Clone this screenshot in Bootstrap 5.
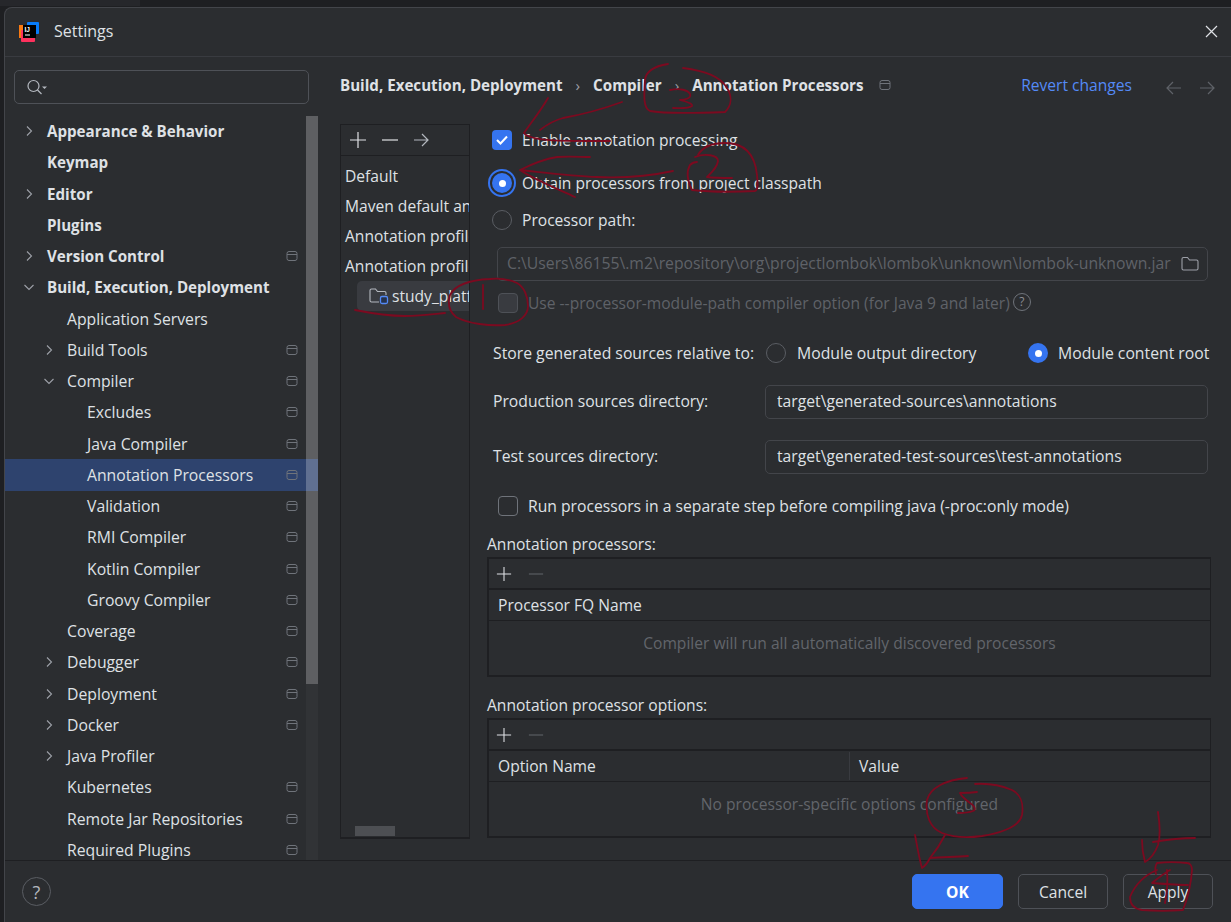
<!DOCTYPE html>
<html lang="en">
<head>
  <meta charset="UTF-8" />
  <meta name="viewport" content="width=device-width, initial-scale=1.0"/>
  <title>Settings</title>
  <link href="https://cdn.jsdelivr.net/npm/bootstrap@5.3.3/dist/css/bootstrap.min.css" rel="stylesheet" />
  <style>
    body { background-color: #1e1f22; color: #dfe1e5; font-family: "Open Sans", "Liberation Sans", sans-serif; font-size: 15.6px; line-height: 20px; }
    .page { width: 1231px; height: 922px; padding-left: 4px; position: relative; overflow: hidden; }
    .strip { width: 140px; height: 6px; margin: 0 0 1px -4px; background: #26272b; }
    .dlg { height: 915px; background: #2b2d30; border: 1px solid #43454a; border-width: 1px 0 0 1px; border-top-left-radius: 8px; }
    .title-bar { height: 49px; padding-left: 14px; border-bottom: 1px solid #393b40; font-size: 16px; }
    .title-bar .caption { margin-left: 15px; margin-bottom: 2px; }
    .close-x { margin-right: 13px; margin-left: auto; margin-bottom: 2px; }
    .middle { height: 803px; }
    .side { width: 313px; flex: none; }
    .search { margin: 13px 0 11.6px 9px; width: 295px; height: 34px; border: 1px solid #4e5157; border-radius: 5px; padding-left: 12px; }
    .tree-wrap { height: 744.4px; overflow: hidden; position: relative; font-size: 15.75px; }
    .row-t { height: 31.26px; padding-right: 20px; white-space: nowrap; }
    .row-t .arrow { width: 18px; flex: none; margin-left: 15px; }
    .lv0 .name { margin-left: 9px; font-weight: 700; font-size: 15.15px; }
    .lv1 .name { margin-left: 29px; }
    .lv2 .name { margin-left: 49px; }
    .lv1 .arrow, .lv2 .arrow { margin-left: 35px; margin-right: -20px; }
    .row-t.sel { background: #2e436e; }
    .row-t .pin { margin-left: auto; }
    /* scrollbar lies over the tree rows */
    .vbar { position: absolute; right: 0; top: 0; bottom: 0; width: 12px; background: rgba(255, 255, 255, .03); }
    .vbar div { height: 568px; background: rgba(255, 255, 255, .22); }
    .main { flex: 1; padding: 0 20px 0 22px; min-width: 0; }
    .crumbs { height: 56px; font-weight: 700; font-size: 15.15px; margin-bottom: 11px; }
    .crumbs .sep { color: #9da0a8; margin: 0 13px; font-weight: 400; }
    .crumbs .end-arrows { margin-right: -4px; }
    .link-blue { color: #548af7; text-decoration: none; font-size: 15.6px; }
    .nav-arrow { margin-top: 6px; margin-left: 17px; }
    .nav-arrow.first { margin-left: 34px; transform: scaleX(-1); }
    .profiles { width: 130px; height: 715px; flex: none; border: 1px solid #1e1f22; border-bottom-width: 2px; position: relative; overflow: hidden; }
    .prof-bar { height: 31px; border-bottom: 1px solid #1e1f22; padding-left: 8px; gap: 14px; }
    .c-soft { color: #b4b8bf; }
    .c-main { color: #dfe1e5; }
    .prof-list { padding-top: 5px; }
    .prof-list div { height: 30.1px; padding-left: 4px; white-space: nowrap; display: flex; align-items: center; }
    .prof-list .mod { background: #393b40; margin-left: 16px; padding-left: 12px; border-radius: 5px 0 0 5px; gap: 3px; }
    .hbar { position: absolute; left: 14px; bottom: 1px; width: 40px; height: 10px; background: #4d4f53; }
    .opts { flex: 1; margin-left: 17px; min-width: 0; }
    .line { height: 32px; white-space: nowrap; }
    .top-row { padding-left: 5px; }
    .mt-obtain { margin-top: 11px; }
    .mt-path { margin-top: 5px; }
    .lbl { margin-left: 10px; }
    .ij-check { width: 20px; height: 20px; border-radius: 4px; flex: none; background: #3574f0; }
    .ij-check.off { background: #393b40; border: 1px solid #4e5157; }
    .ij-check.plain { background: transparent; border: 1px solid #6f737a; }
    .ij-radio { width: 20px; height: 20px; border-radius: 50%; flex: none; border: 1px solid #5a5d63; }
    .ij-radio.on { background: #3574f0; border: 0; display: flex; align-items: center; justify-content: center; }
    .ij-radio.on::after { content: ""; width: 7px; height: 7px; background: #fff; border-radius: 50%; }
    .ij-radio.focus { box-shadow: 0 0 0 2px #2b2d30, 0 0 0 4px #3574f0; }
    .dim { color: #5f6268; }
    .dim2 { color: #62656b; }
    .form-control.ij { height: 34px; background: #2b2d30; border: 1px solid #43454a; border-radius: 5px; color: #dfe1e5; font-size: 15.7px; padding: 0 10px 2px 11px; line-height: 30px; box-shadow: none; }
    .form-control.ij.off { color: #5f6268; padding-left: 9px; font-size: 15.75px; }
    .path-box { margin: 11px 3px 0 10px; }
    .folder { position: absolute; right: 9px; top: 9px; }
    .chk-row { padding-left: 11px; }
    .mt-chk { margin-top: 6px; }
    .q-mark { width: 18px; height: 18px; border: 1px solid #6f737a; border-radius: 50%; color: #8b8e95; font-size: 12px; display: flex; align-items: center; justify-content: center; margin-left: 3px; margin-bottom: 2px; }
    .store-row { margin-top: 18px; padding-left: 6px; font-size: 15.75px; }
    .store-row .cap { width: 273px; flex: none; }
    .store-row .opt1 { width: 231px; margin-left: 11px; flex: none; }
    .store-row .opt2 { margin-left: 10px; }
    .dir-row { padding: 0 3px 0 6px; font-size: 15.7px; }
    .dir-row span { width: 272px; flex: none; margin-bottom: 2px; }
    .dir-a { margin-top: 16px; }
    .dir-b { margin-top: 21px; }
    .run-row { margin-top: 16px; font-size: 15.7px; }
    .group-label { height: 20px; margin-bottom: 3px; }
    .group-label.first { margin-top: 12px; }
    .group-label.second { margin-top: 18px; }
    .group { height: 120px; border: 1px solid #1e1f22; border-width: 2px 1px 2px 2px; overflow: hidden; }
    .group-bar { height: 31px; border-bottom: 2px solid #1e1f22; padding-left: 7px; gap: 16px; }
    .group-head { height: 31px; border-bottom: 1px solid #1e1f22; padding-left: 9px; }
    .group-head .col2 { border-left: 1px solid #393b40; padding-left: 9px; height: 28px; margin-left: auto; width: 361px; display: flex; align-items: center; }
    .group-empty { height: 54px; padding-bottom: 10px; }
    .footer { height: 62px; border-top: 1px solid #1e1f22; padding: 0 18px 0 17px; }
    .btn.ij { width: 90px; height: 35px; padding: 2px 0 0; font-size: 15.6px; color: #dfe1e5; border: 1px solid #4e5157; border-radius: 5px; background: transparent; margin-left: 15px; }
    .btn.ij.primary { width: 91px; background: #3574f0; border-color: #3574f0; color: #fff; font-weight: 700; margin-left: auto; }
    .help { width: 29px; height: 29px; border: 1px solid #5a5d63; border-radius: 50%; color: #b4b8bf; font-size: 18px; }
    .ink { position: absolute; left: 0; top: 0; pointer-events: none; }
    .ink path { fill: none; stroke: #7c0a20; stroke-width: 1.8; stroke-linecap: round; stroke-linejoin: round; }
    .logo-text { font: 700 6.5px "Liberation Sans", sans-serif; fill: #fff; }
  </style>
</head>
<body>
  <svg width="0" height="0" class="position-absolute">
    <symbol id="pin" viewBox="0 0 12 12"><rect x="1" y="1.5" width="10" height="9" rx="2" fill="none" stroke="#6f737a"/><path d="M1 4.5h10" stroke="#6f737a"/></symbol>
    <symbol id="right" viewBox="0 0 12 12"><path d="M4 1.5 8.5 6 4 10.5" fill="none" stroke="#9da0a8" stroke-width="1.1"/></symbol>
    <symbol id="down" viewBox="0 0 12 12"><path d="M1.5 4 6 8.5 10.5 4" fill="none" stroke="#9da0a8" stroke-width="1.1"/></symbol>
    <symbol id="plus" viewBox="0 0 18 18"><path d="M9 1v16M1 9h16" stroke="#dfe1e5" stroke-width="1.2"/></symbol>
    <symbol id="minus" viewBox="0 0 18 18"><path d="M1 9h16" stroke="currentColor" stroke-width="1.2"/></symbol>
    <symbol id="arrow" viewBox="0 0 16 14"><path d="M1 7h14M9 1l6 6-6 6" fill="none" stroke="currentColor" stroke-width="1.2"/></symbol>
  </svg>

  <div class="page">
    <div class="strip"></div>
    <div class="dlg d-flex flex-column">
      <div class="title-bar d-flex align-items-center">
        <svg width="20" height="20" viewBox="0 0 20 20">
          <rect x="0" y="3" width="13" height="13" fill="#f97a12"/>
          <rect x="8" y="0" width="12" height="12" rx="1" fill="#087cfa"/>
          <rect x="2" y="8" width="14" height="12" rx="1" fill="#fe315d"/>
          <rect x="4" y="3" width="13" height="13" fill="#000"/>
          <rect x="6" y="12.5" width="5" height="1" fill="#fff"/>
          <text class="logo-text" x="5.500" y="10">IJ</text>
        </svg>
        <span class="caption">Settings</span>
        <svg class="close-x" width="13" height="13" viewBox="0 0 13 13"><path d="M1 1l11 11M12 1 1 12" stroke="#dfe1e5" stroke-width="1.2"/></svg>
      </div>

      <div class="middle d-flex">
        <div class="side">
          <div class="search d-flex align-items-center">
            <svg width="20" height="17" viewBox="0 0 20 17"><circle cx="6.500" cy="7" r="5.500" fill="none" stroke="#b4b8bf" stroke-width="1.2"/><path d="M10.500 11l4 4" stroke="#b4b8bf" stroke-width="1.2"/><path d="M15 7.500h5l-2.500 2.500z" fill="#b4b8bf"/></svg>
          </div>
          <div class="tree-wrap">
            <div class="row-t lv0 d-flex align-items-center"><svg class="arrow" height="12"><use href="#right"/></svg><span class="name">Appearance &amp; Behavior</span></div>
            <div class="row-t lv0 d-flex align-items-center"><span class="arrow"></span><span class="name">Keymap</span></div>
            <div class="row-t lv0 d-flex align-items-center"><svg class="arrow" height="12"><use href="#right"/></svg><span class="name">Editor</span></div>
            <div class="row-t lv0 d-flex align-items-center"><span class="arrow"></span><span class="name">Plugins</span></div>
            <div class="row-t lv0 d-flex align-items-center"><svg class="arrow" height="12"><use href="#right"/></svg><span class="name">Version Control</span><svg class="pin" width="12" height="12"><use href="#pin"/></svg></div>
            <div class="row-t lv0 d-flex align-items-center"><svg class="arrow" height="12"><use href="#down"/></svg><span class="name">Build, Execution, Deployment</span></div>
            <div class="row-t lv1 d-flex align-items-center"><span class="arrow"></span><span class="name">Application Servers</span></div>
            <div class="row-t lv1 d-flex align-items-center"><svg class="arrow" height="12"><use href="#right"/></svg><span class="name">Build Tools</span><svg class="pin" width="12" height="12"><use href="#pin"/></svg></div>
            <div class="row-t lv1 d-flex align-items-center"><svg class="arrow" height="12"><use href="#down"/></svg><span class="name">Compiler</span><svg class="pin" width="12" height="12"><use href="#pin"/></svg></div>
            <div class="row-t lv2 d-flex align-items-center"><span class="arrow"></span><span class="name">Excludes</span><svg class="pin" width="12" height="12"><use href="#pin"/></svg></div>
            <div class="row-t lv2 d-flex align-items-center"><span class="arrow"></span><span class="name">Java Compiler</span><svg class="pin" width="12" height="12"><use href="#pin"/></svg></div>
            <div class="row-t lv2 sel d-flex align-items-center"><span class="arrow"></span><span class="name">Annotation Processors</span><svg class="pin" width="12" height="12"><use href="#pin"/></svg></div>
            <div class="row-t lv2 d-flex align-items-center"><span class="arrow"></span><span class="name">Validation</span><svg class="pin" width="12" height="12"><use href="#pin"/></svg></div>
            <div class="row-t lv2 d-flex align-items-center"><span class="arrow"></span><span class="name">RMI Compiler</span><svg class="pin" width="12" height="12"><use href="#pin"/></svg></div>
            <div class="row-t lv2 d-flex align-items-center"><span class="arrow"></span><span class="name">Kotlin Compiler</span><svg class="pin" width="12" height="12"><use href="#pin"/></svg></div>
            <div class="row-t lv2 d-flex align-items-center"><span class="arrow"></span><span class="name">Groovy Compiler</span><svg class="pin" width="12" height="12"><use href="#pin"/></svg></div>
            <div class="row-t lv1 d-flex align-items-center"><span class="arrow"></span><span class="name">Coverage</span><svg class="pin" width="12" height="12"><use href="#pin"/></svg></div>
            <div class="row-t lv1 d-flex align-items-center"><svg class="arrow" height="12"><use href="#right"/></svg><span class="name">Debugger</span><svg class="pin" width="12" height="12"><use href="#pin"/></svg></div>
            <div class="row-t lv1 d-flex align-items-center"><svg class="arrow" height="12"><use href="#right"/></svg><span class="name">Deployment</span><svg class="pin" width="12" height="12"><use href="#pin"/></svg></div>
            <div class="row-t lv1 d-flex align-items-center"><svg class="arrow" height="12"><use href="#right"/></svg><span class="name">Docker</span><svg class="pin" width="12" height="12"><use href="#pin"/></svg></div>
            <div class="row-t lv1 d-flex align-items-center"><svg class="arrow" height="12"><use href="#right"/></svg><span class="name">Java Profiler</span></div>
            <div class="row-t lv1 d-flex align-items-center"><span class="arrow"></span><span class="name">Kubernetes</span><svg class="pin" width="12" height="12"><use href="#pin"/></svg></div>
            <div class="row-t lv1 d-flex align-items-center"><span class="arrow"></span><span class="name">Remote Jar Repositories</span><svg class="pin" width="12" height="12"><use href="#pin"/></svg></div>
            <div class="row-t lv1 d-flex align-items-center"><span class="arrow"></span><span class="name">Required Plugins</span><svg class="pin" width="12" height="12"><use href="#pin"/></svg></div>
            <div class="vbar"><div></div></div>
          </div>
        </div>

        <div class="main">
          <div class="crumbs d-flex align-items-center">
            <span>Build, Execution, Deployment</span><span class="sep">›</span><span>Compiler</span><span class="sep">›</span><span>Annotation Processors</span>
            <svg class="ms-3" width="12" height="12"><use href="#pin"/></svg>
            <a class="link-blue fw-normal ms-auto" href="#">Revert changes</a>
            <svg class="dim nav-arrow first" width="16" height="14"><use href="#arrow"/></svg>
            <svg class="dim nav-arrow end-arrows" width="16" height="14"><use href="#arrow"/></svg>
          </div>

          <div class="d-flex">
            <div class="profiles">
              <div class="prof-bar d-flex align-items-center">
                <svg width="18" height="18"><use href="#plus"/></svg>
                <svg width="18" height="18" class="c-main"><use href="#minus"/></svg>
                <svg width="16" height="14" class="c-soft"><use href="#arrow"/></svg>
              </div>
              <div class="prof-list">
                <div>Default</div>
                <div>Maven default annotation processors profile</div>
                <div>Annotation profile for platform</div>
                <div>Annotation profile for study</div>
                <div class="mod">
                  <svg width="20" height="18" viewBox="0 0 20 18" class="flex-shrink-0"><path d="M1 3.500q0-1.500 1.500-1.500h4l2 2.500h7q1.500 0 1.500 1.500v2M10 15H2.500Q1 15 1 13.500V3.500" fill="none" stroke="#b4b8bf" stroke-width="1.100"/><rect x="11.500" y="9.500" width="7" height="7" rx="1.500" fill="#25324d" stroke="#548af7" stroke-width="1.300"/></svg>
                  <span>study_platform</span>
                </div>
              </div>
              <div class="hbar"></div>
            </div>

            <div class="opts">
              <div class="line top-row d-flex align-items-center">
                <span class="ij-check d-flex align-items-center justify-content-center"><svg width="14" height="12" viewBox="0 0 14 12"><path d="M2 6l3.500 3.500L12 2.500" fill="none" stroke="#fff" stroke-width="2"/></svg></span>
                <span class="lbl">Enable annotation processing</span>
              </div>
              <div class="line top-row mt-obtain d-flex align-items-center">
                <span class="ij-radio on focus"></span>
                <span class="lbl">Obtain processors from project classpath</span>
              </div>
              <div class="line top-row mt-path d-flex align-items-center">
                <span class="ij-radio"></span>
                <span class="lbl">Processor path:</span>
              </div>
              <div class="position-relative path-box">
                <input class="form-control ij off" value="C:\Users\86155\.m2\repository\org\projectlombok\lombok\unknown\lombok-unknown.jar" readonly>
                <svg class="folder" width="18" height="16" viewBox="0 0 18 16"><path d="M1 3q0-1.500 1.500-1.500h4l2 2.500h7q1.500 0 1.500 1.500v7q0 1.500-1.500 1.500h-13Q1 14 1 12.500z" fill="none" stroke="#9da0a8" stroke-width="1.100"/></svg>
              </div>
              <div class="line chk-row mt-chk d-flex align-items-center">
                <span class="ij-check off"></span>
                <span class="dim lbl">Use --processor-module-path compiler option (for Java 9 and later)</span>
                <span class="q-mark">?</span>
              </div>
              <div class="line store-row d-flex align-items-center">
                <span class="cap">Store generated sources relative to:</span>
                <span class="ij-radio"></span><span class="opt1">Module output directory</span>
                <span class="ij-radio on"></span><span class="opt2">Module content root</span>
              </div>
              <div class="dir-row dir-a d-flex align-items-center"><span>Production sources directory:</span><input class="form-control ij" value="target\generated-sources\annotations" readonly></div>
              <div class="dir-row dir-b d-flex align-items-center"><span>Test sources directory:</span><input class="form-control ij" value="target\generated-test-sources\test-annotations" readonly></div>
              <div class="line chk-row run-row d-flex align-items-center">
                <span class="ij-check plain"></span>
                <span class="lbl">Run processors in a separate step before compiling java (-proc:only mode)</span>
              </div>
              <div class="group-label first">Annotation processors:</div>
              <div class="group">
                <div class="group-bar d-flex align-items-center"><svg width="16" height="16"><use href="#plus"/></svg><svg class="dim" width="16" height="16"><use href="#minus"/></svg></div>
                <div class="group-head d-flex align-items-center">Processor FQ Name</div>
                <div class="group-empty dim2 d-flex align-items-center justify-content-center">Compiler will run all automatically discovered processors</div>
              </div>
              <div class="group-label second">Annotation processor options:</div>
              <div class="group">
                <div class="group-bar d-flex align-items-center"><svg width="16" height="16"><use href="#plus"/></svg><svg class="dim" width="16" height="16"><use href="#minus"/></svg></div>
                <div class="group-head d-flex align-items-center">Option Name<div class="col2">Value</div></div>
                <div class="group-empty dim2 d-flex align-items-center justify-content-center">No processor-specific options configured</div>
              </div>
            </div>
          </div>
        </div>
      </div>

      <div class="footer d-flex align-items-center">
        <span class="help d-flex align-items-center justify-content-center">?</span>
        <button class="btn ij primary">OK</button>
        <button class="btn ij">Cancel</button>
        <button class="btn ij">Apply</button>
      </div>
    </div>

    <!-- hand-drawn red marks on top of the dialog -->
    <svg class="ink" width="1231" height="922" viewBox="0 0 1231 922">
      <path d="M548 98C540 112 530 124 524 133C530 142 570 141 610 141"/>
      <path d="M622 102C600 110 585 114 563 118C552 121 545 126 540 130"/>
      <path d="M668 64C655 66 646 70 645 80C644 95 643 108 650 111C665 114 700 113 725 112C732 105 732 96 727 88C720 76 705 71 683 68"/>
      <path d="M670 90C680 88 688 90 690 94C692 98 685 100 680 100C688 102 693 104 692 106C688 109 680 108 673 108"/>
      <path d="M673 171C650 176 620 178 597 177C570 176 540 172 520 170C530 165 545 159 557 157C570 156 580 157 590 157M520 170C535 180 560 190 575 197"/>
      <path d="M698 155C702 148 710 143 725 143C745 143 755 155 757 175C758 185 758 190 755 191C735 192 710 192 692 190C687 180 686 172 690 165C692 163 695 162 697 162"/>
      <path d="M695 157C705 153 718 155 718 161C717 168 712 172 707 177C715 178 725 178 732 178"/>
      <path d="M355 310C375 314 390 316 405 316C420 316 435 314 445 313"/>
      <path d="M490 279C470 280 455 285 450 295C447 305 450 312 456 317C468 324 490 326 505 325C520 323 528 315 528 306C528 296 524 287 517 283C508 279 498 278 490 279"/>
      <path d="M483 285V309"/>
      <path d="M967 778C945 780 930 788 927 800C925 815 930 828 942 833C955 838 968 838 982 836C1005 832 1020 825 1022 815C1024 803 1020 794 1012 790C1000 785 988 783 975 784"/>
      <path d="M977 792C970 793 965 793 960 793C962 797 966 800 970 803C975 806 976 810 973 811C968 813 963 813 958 813"/>
      <path d="M945 835C940 845 935 852 930 858C942 857 955 857 968 856M930 858C928 862 925 866 922 868C919 858 917 845 915 835"/>
      <path d="M1158 812C1160 825 1161 835 1158 845C1155 853 1152 858 1145 862C1143 855 1142 848 1142 840M1153 842C1165 840 1180 838 1195 838"/>
      <path d="M1157 870C1145 875 1135 885 1130 897C1130 905 1135 909 1142 910C1155 911 1170 911 1183 910C1187 900 1191 885 1192 870C1192 866 1190 863 1187 863C1178 862 1165 862 1157 863C1155 866 1155 870 1156 874"/>
      <path d="M1170 870C1163 874 1157 879 1152 883C1165 884 1178 885 1188 885M1167 870C1168 882 1167 893 1165 903"/>
    </svg>
  </div>

  <script src="https://cdn.jsdelivr.net/npm/bootstrap@5.3.3/dist/js/bootstrap.bundle.min.js"></script>
</body>
</html>
